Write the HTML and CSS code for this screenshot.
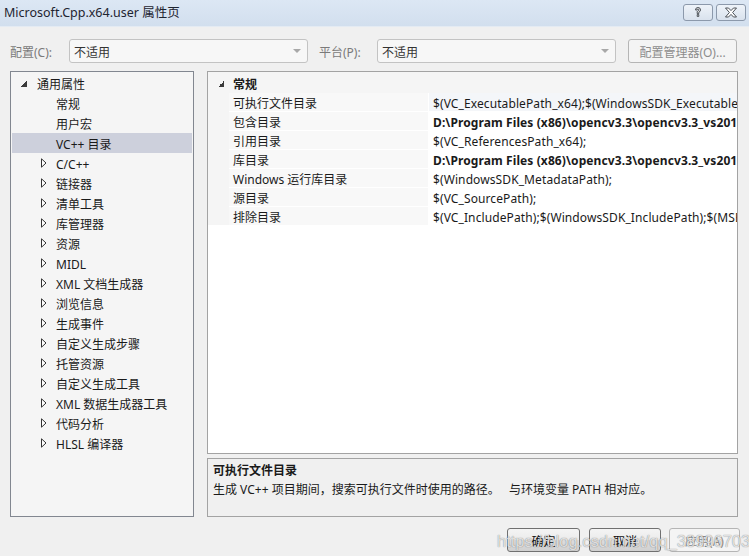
FILE: index.html
```html
<!DOCTYPE html>
<html lang="zh-CN">
<head>
    <meta charset="UTF-8">
    <title>Microsoft.Cpp.x64.user 属性页</title>
    <link rel="stylesheet" href="styles.css">
</head>
<body>
<div class="window">
    <div class="titlebar">
        <span class="title">Microsoft.Cpp.x64.user 属性页</span>
        <div class="caption-btns">
            <span class="cap-btn">
                <svg width="12" height="12" viewBox="0 0 12 12"><path d="M3.5 4 Q3.5 1.5 6 1.5 Q8.5 1.5 8.5 4 Q8.5 5.5 6.8 6.2 L6.8 7.6 L5.2 7.6 L5.2 5.4 Q7 4.9 7 4 Q7 3 6 3 Q5 3 5 4 Z M5.2 8.6 L6.8 8.6 L6.8 10.4 L5.2 10.4 Z" fill="#fff" stroke="#3a3f46" stroke-width="0.9" stroke-linejoin="round"/></svg>
            </span>
            <span class="cap-btn">
                <svg width="14" height="11" viewBox="0 0 14 11"><path d="M1.5 1 L4.5 1 L7 3.6 L9.5 1 L12.5 1 L8.6 5.5 L12.5 10 L9.5 10 L7 7.4 L4.5 10 L1.5 10 L5.4 5.5 Z" fill="#fff" stroke="#3a3f46" stroke-width="0.9" stroke-linejoin="round"/></svg>
            </span>
        </div>
    </div>

    <div class="toolbar">
        <span class="lbl">配置(C):</span>
        <div class="combo"><span>不适用</span><i class="arrow"></i></div>
        <span class="lbl lbl-platform">平台(P):</span>
        <div class="combo"><span>不适用</span><i class="arrow"></i></div>
        <span class="btn btn-manager">配置管理器(O)...</span>
    </div>

    <div class="main">
        <ul class="tree">
            <li class="node lvl0"><i class="twisty open"></i>通用属性</li>
            <li class="node lvl1"><i class="twisty"></i>常规</li>
            <li class="node lvl1"><i class="twisty"></i>用户宏</li>
            <li class="node lvl1 selected"><i class="twisty"></i>VC++ 目录</li>
            <li class="node lvl1"><i class="twisty closed"></i>C/C++</li>
            <li class="node lvl1"><i class="twisty closed"></i>链接器</li>
            <li class="node lvl1"><i class="twisty closed"></i>清单工具</li>
            <li class="node lvl1"><i class="twisty closed"></i>库管理器</li>
            <li class="node lvl1"><i class="twisty closed"></i>资源</li>
            <li class="node lvl1"><i class="twisty closed"></i>MIDL</li>
            <li class="node lvl1"><i class="twisty closed"></i>XML 文档生成器</li>
            <li class="node lvl1"><i class="twisty closed"></i>浏览信息</li>
            <li class="node lvl1"><i class="twisty closed"></i>生成事件</li>
            <li class="node lvl1"><i class="twisty closed"></i>自定义生成步骤</li>
            <li class="node lvl1"><i class="twisty closed"></i>托管资源</li>
            <li class="node lvl1"><i class="twisty closed"></i>自定义生成工具</li>
            <li class="node lvl1"><i class="twisty closed"></i>XML 数据生成器工具</li>
            <li class="node lvl1"><i class="twisty closed"></i>代码分析</li>
            <li class="node lvl1"><i class="twisty closed"></i>HLSL 编译器</li>
        </ul>

        <div class="right">
            <div class="grid">
                <div class="cat-row"><i class="twisty open"></i>常规</div>
                <div class="props">
                    <div class="prop current"><span class="name">可执行文件目录</span><span class="value">$(VC_ExecutablePath_x64);$(WindowsSDK_ExecutablePath);$(VS_ExecutablePath)</span></div>
                    <div class="prop"><span class="name">包含目录</span><span class="value bold">D:\Program Files (x86)\opencv3.3\opencv3.3_vs2015\include</span></div>
                    <div class="prop"><span class="name">引用目录</span><span class="value">$(VC_ReferencesPath_x64);</span></div>
                    <div class="prop"><span class="name">库目录</span><span class="value bold">D:\Program Files (x86)\opencv3.3\opencv3.3_vs2015\lib</span></div>
                    <div class="prop"><span class="name">Windows 运行库目录</span><span class="value">$(WindowsSDK_MetadataPath);</span></div>
                    <div class="prop"><span class="name">源目录</span><span class="value">$(VC_SourcePath);</span></div>
                    <div class="prop"><span class="name">排除目录</span><span class="value">$(VC_IncludePath);$(WindowsSDK_IncludePath);$(MSBuild_ExecutablePath)</span></div>
                </div>
            </div>
            <div class="desc">
                <div class="desc-title">可执行文件目录</div>
                <div class="desc-text">生成 VC++ 项目期间，搜索可执行文件时使用的路径。&nbsp;&nbsp; 与环境变量 PATH 相对应。</div>
            </div>
        </div>
    </div>

    <div class="footer">
        <span class="btn btn-ok">确定</span>
        <span class="btn btn-cancel">取消</span>
        <span class="btn btn-apply disabled">应用(A)</span>
    </div>

    <div class="watermark">https://blog.csdn.net/qq_38996703</div>
</div>
</body>
</html>
```

FILE: styles.css
```css
* {
    box-sizing: border-box;
}
body {
    margin: 0;
    font-family: "Noto Sans", "Noto Sans CJK SC", sans-serif;
    font-size: 12px;
    color: #1a1a1a;
    background: #f0f0f0;
}
.window {
    position: relative;
    width: 749px;
    height: 556px;
    overflow: hidden;
    background: #f0f0f0;
}

/* title bar */
.titlebar {
    height: 27px;
    display: flex;
    align-items: center;
    padding-left: 4px;
    background: linear-gradient(#dce7f4, #d2dfee);
    border-bottom: 1px solid #e4ebf3;
}
.title {
    font-size: 12.5px;
    color: #1e2430;
    line-height: 16px;
}
.caption-btns {
    margin-left: auto;
    margin-right: 3px;
    margin-top: -2px;
    display: flex;
    gap: 3px;
}
.cap-btn {
    width: 30px;
    height: 17px;
    border: 1px solid #8c99ab;
    border-radius: 3px;
    background: linear-gradient(#eef3f9, #d9e2ed);
    display: flex;
    align-items: center;
    justify-content: center;
}

/* configuration row */
.toolbar {
    display: flex;
    align-items: center;
    height: 24px;
    margin-top: 12px;
    padding-left: 10px;
}
.lbl {
    width: 59px;
    padding-top: 2px;
    color: #7a7a7a;
}
.lbl-platform {
    width: 58px;
    margin-left: 11px;
}
.combo {
    width: 239px;
    height: 24px;
    border: 1px solid #c3c3c3;
    border-radius: 3px;
    background: #f7f7f7;
    display: flex;
    align-items: center;
    padding-left: 4px;
    padding-top: 2px;
    color: #333;
}
.combo .arrow {
    margin-left: auto;
    margin-right: 6px;
    margin-top: -2px;
    width: 0;
    height: 0;
    border-left: 4px solid transparent;
    border-right: 4px solid transparent;
    border-top: 4px solid #a8a8a8;
}
.btn {
    display: flex;
    align-items: center;
    justify-content: center;
    height: 24px;
    padding-top: 2px;
    border: 1px solid #707070;
    border-radius: 3px;
    background: linear-gradient(#f4f4f4 0%, #ebebeb 50%, #dddddd 51%, #d0d0d0 100%);
    color: #111;
}
.btn-manager {
    width: 109px;
    margin-left: 12px;
    border-color: #b5b5b5;
    background: #f4f4f4;
    color: #8d8d8d;
}

/* main area */
.main {
    display: flex;
    margin-top: 8px;
    padding-left: 10px;
    height: 446px;
}
.tree {
    list-style: none;
    margin: 0;
    padding: 1px;
    width: 184px;
    height: 446px;
    border: 1px solid #828790;
    background: #f5f5f5;
}
.node {
    display: flex;
    align-items: center;
    height: 20px;
    padding-top: 2px;
    white-space: nowrap;
}
.node.lvl0 {
    padding-left: 9px;
}
.node.lvl1 {
    padding-left: 28px;
}
.node.selected {
    background: #cdd0dc;
}
.twisty {
    display: inline-block;
    flex: none;
    width: 16px;
    height: 10px;
    margin-top: -2px;
}
.twisty.open {
    background: linear-gradient(to bottom right, transparent 50%, #3b3b3b 50%) no-repeat 0 3px / 6px 6px;
}
.twisty.closed {
    background: url("data:image/svg+xml,%3Csvg xmlns='http://www.w3.org/2000/svg' width='6' height='10'%3E%3Cpath d='M0.5 0.8 L5 5 L0.5 9.2 Z' fill='%23fff' stroke='%23333' stroke-width='1'/%3E%3C/svg%3E") no-repeat 1px 0;
}

.right {
    width: 531px;
    margin-left: 13px;
    display: flex;
    flex-direction: column;
}
.grid {
    height: 383px;
    border: 1px solid #a3a3a3;
    background: #fff;
    overflow: hidden;
}
.cat-row {
    display: flex;
    align-items: center;
    height: 21px;
    padding-left: 10px;
    padding-top: 2px;
    background: #f5f5f5;
    font-weight: bold;
}
.cat-row .twisty {
    width: 15px;
}
.props {
    background: linear-gradient(to right, #f5f5f5 21px, #fff 21px);
}
.prop {
    display: grid;
    grid-template-columns: 199px 1fr;
    column-gap: 1px;
    height: 18px;
    margin-left: 21px;
    margin-bottom: 1px;
}
.prop span {
    display: flex;
    align-items: center;
    padding-top: 2px;
    white-space: nowrap;
    overflow: hidden;
}
.name {
    padding-left: 4px;
    background: #f8f8f8;
}
.value {
    padding-left: 4px;
    background: #fff;
    letter-spacing: 0.1px;
}
.prop.current .value {
    background: #f4f6f9;
}
.value.bold {
    font-weight: bold;
}

.desc {
    margin-top: 4px;
    height: 59px;
    border: 1px solid #a3a3a3;
    background: #f0f0f0;
    padding: 3px 5px 0;
}
.desc-title {
    font-weight: bold;
    line-height: 18px;
}
.desc-text {
    line-height: 20px;
}

/* dialog buttons */
.footer {
    display: flex;
    justify-content: flex-end;
    padding-right: 9px;
    margin-top: 11px;
    gap: 9px;
}
.btn-ok {
    width: 73px;
}
.btn-cancel {
    width: 72px;
}
.btn-apply {
    width: 71px;
    margin-left: -1px;
}
.btn.disabled {
    border-color: #b5b5b5;
    background: #f4f4f4;
    color: #8d8d8d;
}

.watermark {
    position: absolute;
    left: 497px;
    top: 529px;
    font-family: "Liberation Sans", sans-serif;
    font-size: 16.5px;
    line-height: 24px;
    color: rgba(255, 255, 255, 0.75);
    text-shadow: 0 0 1px rgba(0, 0, 0, 0.35), 0 0 1px rgba(0, 0, 0, 0.25);
    white-space: nowrap;
    pointer-events: none;
}
```
